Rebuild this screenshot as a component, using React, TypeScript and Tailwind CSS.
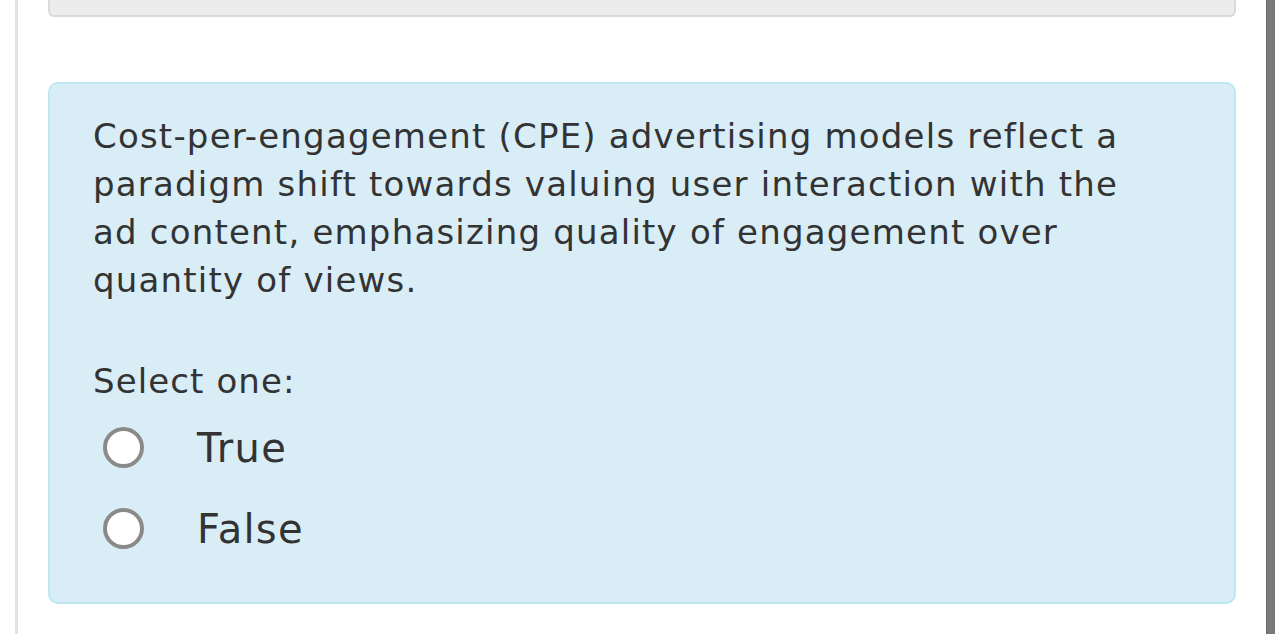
export default function App() {
  const options = ['True', 'False'];

  return (
    <div
      className="flex h-[634px] w-[1284px] overflow-hidden bg-white text-[#333]"
      style={{ fontFamily: '"DejaVu Sans", Verdana, sans-serif' }}
    >
      <div className="w-[15px] shrink-0" />
      <div className="w-[3px] shrink-0 bg-[#e2e2e2]" />
      <div className="w-[30px] shrink-0" />

      <main className="flex w-[1188px] shrink-0 flex-col">
        {/* previous block, cut off at the top */}
        <div className="h-[17px] rounded-b-[6px] border-2 border-t-0 border-[#dadada] bg-[#ececec]" />

        <section className="mt-[65px] h-[522px] rounded-[10px] border-2 border-[#bde7f1] bg-[#d9edf7] pl-[43px] pr-[44px] pt-[28px]">
          <p className="max-w-[1045px] text-[34px] leading-[48px] tracking-[1.2px]">
            Cost-per-engagement (CPE) advertising models reflect a paradigm shift towards valuing user
            interaction with the ad content, emphasizing quality of engagement over quantity of views.
          </p>

          <div className="mt-[53px] text-[34px] leading-[48px] tracking-[1.1px]">Select one:</div>

          <div className="mt-[2px] flex flex-col">
            {options.map((opt) => (
              <label key={opt} className="flex h-[81px] items-center pl-[10px]">
                <span className="h-[41px] w-[41px] shrink-0 rounded-full border-[4px] border-[#8a8a8a] bg-white" />
                <span className="ml-[53px] text-[40px] leading-none tracking-[1.3px]">{opt}</span>
              </label>
            ))}
          </div>
        </section>
      </main>

      <div className="w-[30px] shrink-0" />
      <div className="w-[9px] shrink-0 border-l border-[#6a6a6a] bg-[#7a7a7a]" />
      <div className="flex-1" />
    </div>
  );
}
